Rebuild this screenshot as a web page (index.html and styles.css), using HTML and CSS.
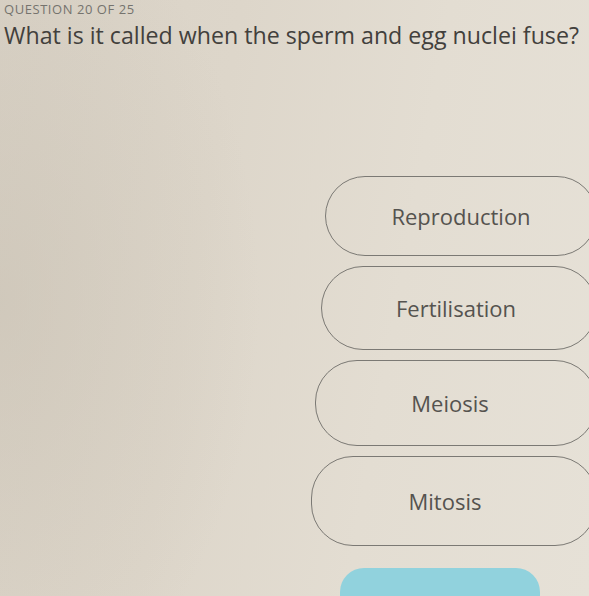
FILE: index.html
```html
<!DOCTYPE html>
<html>
<head>
<meta charset="utf-8">
<link rel="stylesheet" href="styles.css">
</head>
<body>
<div class="page">
  <div class="label">QUESTION 20 OF 25</div>
  <h1 class="question">What is it called when the sperm and egg nuclei fuse?</h1>
  <div class="options">
    <button class="option o1">Reproduction</button>
    <button class="option o2">Fertilisation</button>
    <button class="option o3">Meiosis</button>
    <button class="option o4">Mitosis</button>
  </div>
  <div class="submit-wrap"><div class="submit"></div></div>
</div>
</body>
</html>
```
FILE: styles.css
```css
html, body {
  margin: 0;
  padding: 0;
  height: 100%;
  overflow: hidden;
}
body {
  background:
    radial-gradient(ellipse 260px 420px at 0px 300px, rgba(200,192,178,0.55), rgba(200,192,178,0) 100%),
    linear-gradient(100deg, #d9d2c6 0%, #ddd6ca 35%, #e3ddd2 65%, #e6e1d7 100%);
  font-family: "Open Sans", "Noto Sans", sans-serif;
  color: #4a4844;
}
.page {
  display: flex;
  flex-direction: column;
  padding: 1px 0 0 4px;
}
.label {
  font-size: 13px;
  letter-spacing: 0.55px;
  color: #75736e;
  line-height: 16px;
}
.question {
  margin: 3px 0 0 0;
  font-size: 23.2px;
  font-weight: 400;
  line-height: 30px;
  color: #42403c;
  white-space: nowrap;
}
.options {
  margin-top: 126px;
  display: flex;
  flex-direction: column;
  align-items: flex-end;
  gap: 10px;
  margin-right: -8px;
}
.option {
  border: 1.5px solid #7b7974;
  border-radius: 42px;
  background: transparent;
  font-family: "Open Sans", "Noto Sans", sans-serif;
  font-size: 22px;
  color: #55534f;
  padding: 0;
}
.o1 { width: 272px; height: 80px; }
.o2 { width: 276px; height: 84px; padding-right: 6px; }
.o3 { width: 282px; height: 86px; padding-right: 12px; }
.o4 { width: 286px; height: 90px; padding-right: 18px; }
.submit-wrap {
  margin-top: 22px;
  display: flex;
  padding-left: 336px;
}
.submit {
  width: 200px;
  height: 60px;
  border-radius: 24px;
  background: #91d2dd;
}
```
